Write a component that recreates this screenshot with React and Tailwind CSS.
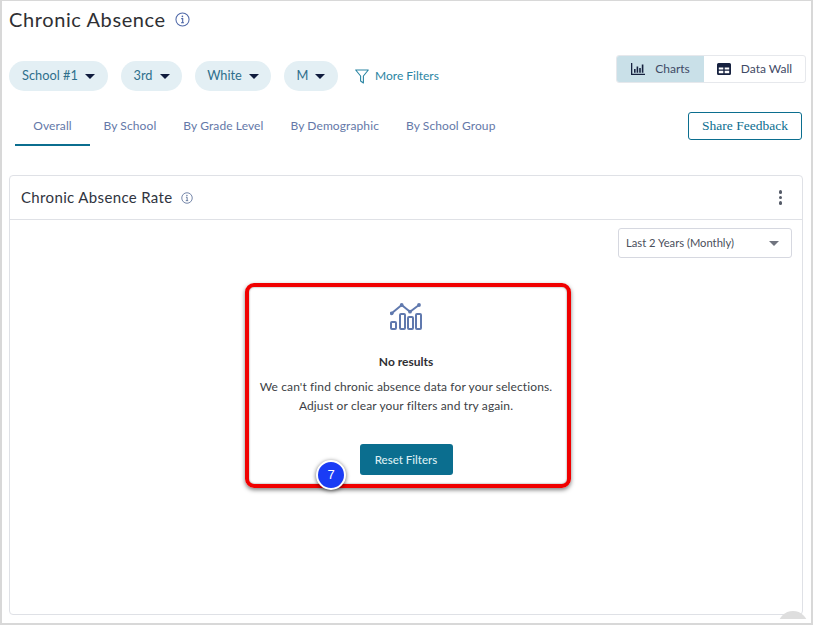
import React from "react";

const filters = [
  { label: "School #1", width: "w-[99px]" },
  { label: "3rd", width: "w-[61px]" },
  { label: "White", width: "w-[76px]" },
  { label: "M", width: "w-[54px]" },
];

const tabs = ["Overall", "By School", "By Grade Level", "By Demographic", "By School Group"];

const InfoIcon = ({ size = 15, color = "#4f68a8" }) => (
  <svg width={size} height={size} viewBox="0 0 16 16" fill="none" stroke={color}>
    <circle cx="8" cy="8" r="7" strokeWidth="1.1" />
    <path d="M6.6 7h1.6v4.4M6.4 11.5h3.2" strokeWidth="1.2" />
    <circle cx="7.9" cy="4.6" r="0.9" fill={color} stroke="none" />
  </svg>
);

const Caret = ({ color = "#0f1b3d" }) => (
  <svg width="10" height="5" viewBox="0 0 10 5" fill={color}>
    <path d="M0 0h10L5 5z" />
  </svg>
);

const App = () => {
  return (
    <div className="w-[814px] h-[627px] bg-white overflow-hidden font-['Lato',sans-serif]">
      <div className="relative w-[813px] h-[625px] border-l-2 border-r-2 border-b-2 border-t border-[#d8d8d8] pl-[7px] pr-[5px]">
        {/* title */}
        <div className="flex items-center gap-[9px] h-[36px]">
          <h1 className="text-[20px] leading-none text-[#2f2f33] tracking-[0.6px]">Chronic Absence</h1>
          <InfoIcon />
        </div>

        {/* filters and view switch */}
        <div className="flex items-start justify-between h-[57px] mt-[17px]">
          <div className="flex items-center mt-[7px]">
            <div className="flex items-center gap-[13px]">
              {filters.map((f) => (
                <button key={f.label} className={`${f.width} h-[30px] rounded-full bg-[#e3eff4] flex items-center justify-center gap-[7px] text-[12.8px] text-[#2f6f8c]`}>
                  {f.label}
                  <Caret />
                </button>
              ))}
            </div>
            <button className="flex items-center gap-[6px] ml-[17px] text-[12px] text-[#2a85a3]">
              <svg width="14" height="15" viewBox="0 0 14 15" fill="none" stroke="#2a85a3" strokeWidth="1.1" strokeLinejoin="round">
                <path d="M0.7 1h12.6L8.4 7v7L5.6 12V7z" />
              </svg>
              More Filters
            </button>
          </div>
          <div className="flex h-[28px] w-[190px] border border-[#e6e8ec] rounded-[3px] overflow-hidden mt-px text-[12px] text-[#3f4a66]">
            <div className="w-[87px] bg-[#c9e0e8] flex items-center justify-center gap-[10px]">
              <svg width="14" height="12" viewBox="0 0 14 12" fill="#16213f">
                <path d="M0 0h1.3v10.7H14V12H0zM3 6h1.6v3.7H3zM5.6 3.5h1.6v6.2H5.6zM8.2 5h1.6v4.7H8.2zM10.8 1.5h1.6v8.2h-1.6z" />
              </svg>
              Charts
            </div>
            <div className="flex-1 flex items-center justify-center gap-[10px]">
              <svg width="14" height="12" viewBox="0 0 14 12" fill="#16213f">
                <path fillRule="evenodd" d="M1.5 0h11A1.5 1.5 0 0 1 14 1.5v9a1.5 1.5 0 0 1-1.5 1.5h-11A1.5 1.5 0 0 1 0 10.5v-9A1.5 1.5 0 0 1 1.5 0zM1.8 4.5v1.9h4.5V4.5zM7.7 4.5v1.9h4.5V4.5zM1.8 7.8v2.4h4.5V7.8zM7.7 7.8v2.4h4.5V7.8z" />
              </svg>
              Data Wall
            </div>
          </div>
        </div>

        {/* tabs */}
        <div className="flex items-start justify-between h-[64px] pr-[4px]">
          <div className="flex pl-[6px]">
            {tabs.map((t, i) => (
              <div key={t} className={`h-[35px] px-[13.5px] pb-[3px] flex items-center justify-center text-[12px] tracking-[0.1px] text-[#6478a8] border-b-[2px] ${i === 0 ? "border-[#0b6e8f] w-[75px]" : "border-transparent"}`}>
                {t}
              </div>
            ))}
          </div>
          <button className="w-[114px] h-[28px] mt-px border border-[#0b6e8f] rounded-[3px] text-[13.5px] text-[#0b6e8f] font-['Liberation_Serif',serif]">
            Share Feedback
          </button>
        </div>

        {/* card */}
        <div className="w-[794px] h-[440px] border border-[#dfe1e6] rounded-[4px] flex flex-col">
          <div className="h-[44px] border-b border-[#dfe1e6] flex items-center justify-between pl-[11px] pr-[20px] shrink-0">
            <div className="flex items-center gap-[8px]">
              <span className="text-[15px] text-[#2f3440] tracking-[0.35px]">Chronic Absence Rate</span>
              <InfoIcon size={12} color="#5b7099" />
            </div>
            <div className="flex flex-col gap-[2px]">
              <span className="w-[3.5px] h-[3.5px] rounded-full bg-[#555b68]" />
              <span className="w-[3.5px] h-[3.5px] rounded-full bg-[#555b68]" />
              <span className="w-[3.5px] h-[3.5px] rounded-full bg-[#555b68]" />
            </div>
          </div>

          <div className="flex-1 pt-[8px]">
            <div className="flex justify-end pr-[10px]">
              <div className="w-[174px] h-[30px] border border-[#d6d8e0] rounded-[3px] flex items-center justify-between pl-[7px] pr-[12px] text-[11.2px] text-[#4a4f5c]">
                Last 2 Years (Monthly)
                <Caret color="#70747f" />
              </div>
            </div>

            {/* no results, with the red callout around it */}
            <div className="relative w-[326px] h-[205px] ml-[235px] mt-[25px] border-[4px] border-[#f00000] rounded-[9px] shadow-[0_2px_4px_rgba(0,0,0,0.5),inset_0_0_2px_rgba(0,0,0,0.5)] flex flex-col items-center pt-[16px] pr-[4px]">
              <svg width="32" height="27" viewBox="0 0 32 27" fill="none" stroke="#6079ae">
                <path d="M1.7 10.3L11.7 2 20 8.7 29 2" strokeWidth="2" />
                <circle cx="1.7" cy="10.3" r="1.9" fill="#6079ae" stroke="none" />
                <circle cx="11.7" cy="2" r="1.9" fill="#6079ae" stroke="none" />
                <circle cx="20" cy="8.7" r="1.9" fill="#6079ae" stroke="none" />
                <circle cx="29" cy="2" r="1.9" fill="#6079ae" stroke="none" />
                <rect x="1" y="19" width="5" height="7" rx="1" strokeWidth="2" />
                <rect x="10" y="11" width="5" height="15" rx="1" strokeWidth="2" />
                <rect x="18" y="14" width="5" height="12" rx="1" strokeWidth="2" />
                <rect x="26" y="11" width="5" height="15" rx="1" strokeWidth="2" />
              </svg>
              <p className="mt-[24px] text-[12px] font-bold text-[#2f2f33] leading-[16px]">No results</p>
              <p className="mt-[7px] text-[12px] text-[#3d3f46] leading-[19px] text-center tracking-[0.12px]">
                We can't find chronic absence data for your selections.
                <br />
                Adjust or clear your filters and try again.
              </p>
              <button className="mt-[29px] w-[93px] h-[31px] bg-[#0b6e8f] rounded-[3px] text-[11.5px] font-medium text-[#dceef3]">
                Reset Filters
              </button>
              <span className="absolute left-[67px] top-[173px] w-[30px] h-[30px] rounded-full bg-[#1a3cf5] border-2 border-white shadow-[0_1px_4px_rgba(0,0,0,0.6)] flex items-center justify-center text-[13px] text-white font-['Liberation_Sans',sans-serif]">
                7
              </span>
            </div>
          </div>
        </div>

        {/* scroll-to-top button peeking out, cut off below */}
        <div className="absolute left-[776px] top-[610px] w-[30px] h-[8px] overflow-hidden">
          <div className="w-[30px] h-[30px] rounded-full bg-[#dedede]" />
        </div>
      </div>
    </div>
  );
};

export default App;
